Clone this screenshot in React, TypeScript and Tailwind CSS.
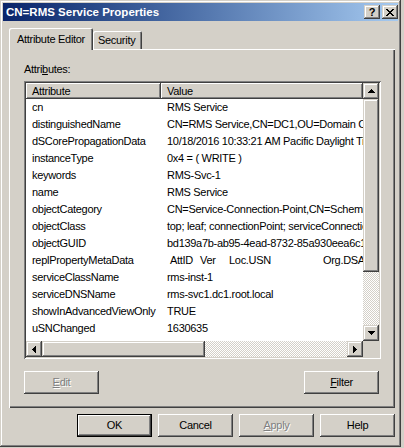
import type { ReactNode } from 'react'

const raised =
  'bg-[#d4d0c8] shadow-[inset_-1px_-1px_#404040,inset_1px_1px_#ffffff,inset_-2px_-2px_#808080,inset_2px_2px_#d4d0c8]'
const raisedSoft =
  'bg-[#d4d0c8] shadow-[inset_-1px_-1px_#404040,inset_1px_1px_#d4d0c8,inset_-2px_-2px_#808080,inset_2px_2px_#ffffff]'
const sunken =
  'shadow-[inset_1px_1px_#808080,inset_-1px_-1px_#ffffff,inset_2px_2px_#404040,inset_-2px_-2px_#d4d0c8]'
const dither =
  'bg-[image:repeating-conic-gradient(#d4d0c8_0%_25%,#ffffff_0%_50%)] bg-[length:2px_2px]'
const disabled = 'text-[#808080] [text-shadow:1px_1px_#ffffff]'

// pixel glyphs drawn as rects
function Pixels({ rows }: { rows: string[] }) {
  const w = rows[0].length
  const h = rows.length
  return (
    <svg width={w} height={h} viewBox={`0 0 ${w} ${h}`} shapeRendering="crispEdges">
      {rows.flatMap((r, y) =>
        r.split('').map((c, x) => (c === 'x' ? <rect key={`${x}-${y}`} x={x} y={y} width={1} height={1} fill="#000" /> : null)),
      )}
    </svg>
  )
}

const closeGlyph = ['xx....xx', '.xx..xx.', '..xxxx..', '...xx...', '..xxxx..', '.xx..xx.', 'xx....xx']
const up = ['...x...', '..xxx..', '.xxxxx.', 'xxxxxxx']
const down = ['xxxxxxx', '.xxxxx.', '..xxx..', '...x...']
const left = ['...x', '..xx', '.xxx', 'xxxx', '.xxx', '..xx', '...x']
const right = ['x...', 'xx..', 'xxx.', 'xxxx', 'xxx.', 'xx..', 'x...']

function Arrow({ rows }: { rows: string[] }) {
  return (
    <div className={`flex h-[16px] w-[16px] shrink-0 items-center justify-center ${raisedSoft}`}>
      <Pixels rows={rows} />
    </div>
  )
}

function Button({ children, isDefault, className = '' }: { children: ReactNode; isDefault?: boolean; className?: string }) {
  return (
    <div className={`h-[23px] w-[75px] ${isDefault ? 'border border-black' : ''} ${className}`}>
      <div className={`flex h-full w-full items-center justify-center ${raised}`}>{children}</div>
    </div>
  )
}

const rows: [string, ReactNode][] = [
  ['cn', 'RMS Service'],
  ['distinguishedName', 'CN=RMS Service,CN=DC1,OU=Domain Controllers,DC=root,DC=local'],
  ['dSCorePropagationData', '10/18/2016 10:33:21 AM Pacific Daylight Time'],
  ['instanceType', '0x4 = ( WRITE )'],
  ['keywords', 'RMS-Svc-1'],
  ['name', 'RMS Service'],
  ['objectCategory', 'CN=Service-Connection-Point,CN=Schema,CN=Configuration,DC=root,DC=local'],
  ['objectClass', 'top; leaf; connectionPoint; serviceConnectionPoint'],
  ['objectGUID', 'bd139a7b-ab95-4ead-8732-85a930eea6c1'],
  [
    'replPropertyMetaData',
    <span className="flex">
      <span className="w-[33px] shrink-0 pl-[3px]">AttID</span>
      <span className="w-[29px] shrink-0">Ver</span>
      <span className="w-[94px] shrink-0">Loc.USN</span>
      <span className="shrink-0">Org.DSA</span>
    </span>,
  ],
  ['serviceClassName', 'rms-inst-1'],
  ['serviceDNSName', 'rms-svc1.dc1.root.local'],
  ['showInAdvancedViewOnly', 'TRUE'],
  ['uSNChanged', '1630635'],
  ['uSNCreated', '730868'],
]

export default function App() {
  return (
    <div className="h-[448px] w-[404px] bg-[#d4d0c8] font-['Liberation_Sans',Arial,sans-serif] text-[11px] leading-[13px] tracking-[-0.3px] text-black">
      <div
        className={`flex h-[447px] w-[401px] flex-col p-[3px] shadow-[inset_-1px_-1px_#404040,inset_1px_1px_#d4d0c8,inset_-2px_-2px_#808080,inset_2px_2px_#ffffff]`}
      >
        {/* title bar */}
        <div className="flex h-[18px] shrink-0 items-center bg-linear-to-r from-[#0a246a] to-[#a6caf0] pl-[3px] pr-[0px]">
          <span className="flex-1 text-[11.5px] font-bold tracking-[0px] text-white">CN=RMS Service Properties</span>
          <div className={`flex h-[14px] w-[16px] items-center justify-center text-[11px] font-bold ${raisedSoft}`}>?</div>
          <div className={`ml-[2px] flex h-[14px] w-[16px] items-center justify-center ${raisedSoft}`}>
            <Pixels rows={closeGlyph} />
          </div>
        </div>

        <div className="px-[6px] pt-[7px]">
          {/* tabs */}
          <div className="flex h-[21px] items-end">
            <div className="relative z-10 mb-[-1px] flex h-[22px] w-[84px] items-center rounded-t-[2px] bg-[#d4d0c8] pl-[8px] shadow-[inset_1px_1px_#ffffff,inset_-1px_0_#404040,inset_-2px_0_#808080]">
              Attribute Editor
            </div>
            <div className="flex h-[18px] w-[49px] items-center rounded-t-[2px] pl-[5px] shadow-[inset_1px_1px_#ffffff,inset_-1px_0_#404040,inset_-2px_0_#808080]">
              Security
            </div>
          </div>

          {/* panel */}
          <div className="h-[359px] w-[386px] px-[15px] pt-[14px] shadow-[inset_1px_1px_#ffffff,inset_-1px_-1px_#404040,inset_-2px_-2px_#808080]">
            <div className="h-[13px]">
              Attri<u>b</u>utes:
            </div>

            <div className={`mt-[5px] h-[278px] w-[357px] bg-white p-[2px] ${sunken}`}>
              <div className="grid h-full grid-cols-[337px_16px] grid-rows-[1fr_16px]">
                <div className="overflow-hidden">
                  <div className="flex h-[16px]">
                    <div className={`flex w-[135px] shrink-0 items-center pl-[6px] ${raised}`}>Attribute</div>
                    <div className={`flex w-[202px] shrink-0 items-center pl-[6px] ${raised}`}>Value</div>
                  </div>
                  <div className="h-[242px] overflow-hidden">
                    {rows.map(([k, v]) => (
                      <div key={k} className="flex h-[17px] items-center whitespace-nowrap">
                        <div className="w-[135px] shrink-0 overflow-hidden pl-[6px]">{k}</div>
                        <div className="shrink-0 pl-[6px]">{v}</div>
                      </div>
                    ))}
                  </div>
                </div>

                <div className="flex flex-col">
                  <Arrow rows={up} />
                  <div className={`h-[173px] shrink-0 ${raisedSoft}`} />
                  <div className={`flex-1 ${dither}`} />
                  <Arrow rows={down} />
                </div>

                <div className="flex">
                  <Arrow rows={left} />
                  <div className={`w-[163px] shrink-0 ${raisedSoft}`} />
                  <div className={`flex-1 ${dither}`} />
                  <Arrow rows={right} />
                </div>
                <div className="bg-[#d4d0c8]" />
              </div>
            </div>

            <div className="mt-[12px] flex justify-between pr-[1px]">
              <Button>
                <span className={disabled}>
                  <u>E</u>dit
                </span>
              </Button>
              <Button>
                <span>
                  <u>F</u>ilter
                </span>
              </Button>
            </div>
          </div>

          {/* dialog buttons */}
          <div className="mt-[6px] flex w-[386px] justify-end gap-[6px]">
            <Button isDefault>OK</Button>
            <Button>Cancel</Button>
            <Button>
              <span className={disabled}>
                <u>A</u>pply
              </span>
            </Button>
            <Button>Help</Button>
          </div>
        </div>
      </div>
    </div>
  )
}
